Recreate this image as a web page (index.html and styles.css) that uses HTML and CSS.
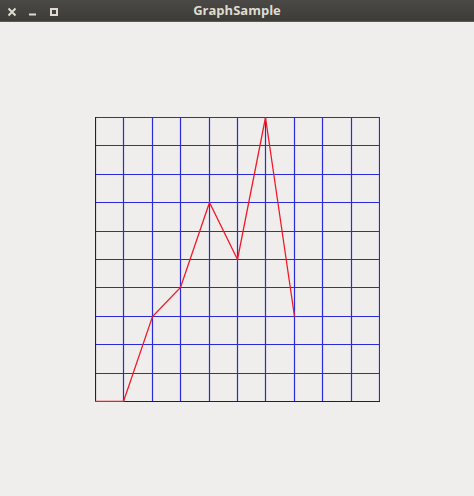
FILE: index.html
```html
<!DOCTYPE html>
<html lang="en">
<head>
    <meta charset="UTF-8">
    <title>GraphSample</title>
    <link rel="stylesheet" href="styles.css">
</head>
<body>
    <div class="titlebar">
        <div class="controls">
            <svg class="btn" width="12" height="12" viewBox="0 0 12 12">
                <path d="M2.5 2.5 L9.5 9.5 M9.5 2.5 L2.5 9.5" stroke="#dfdbd2" stroke-width="2"/>
            </svg>
            <svg class="btn" width="12" height="12" viewBox="0 0 12 12">
                <path d="M2 8.5 H9" stroke="#dfdbd2" stroke-width="2"/>
            </svg>
            <svg class="btn" width="12" height="12" viewBox="0 0 12 12">
                <rect x="3" y="3" width="6" height="6" fill="none" stroke="#dfdbd2" stroke-width="2"/>
            </svg>
        </div>
        <div class="title">GraphSample</div>
    </div>

    <div class="panel">
        <svg class="graph" width="285" height="285" viewBox="0 0 285 285">
            <g class="grid">
                <line x1="28.5" y1="0" x2="28.5" y2="285"/>
                <line x1="57.5" y1="0" x2="57.5" y2="285"/>
                <line x1="85.5" y1="0" x2="85.5" y2="285"/>
                <line x1="114.5" y1="0" x2="114.5" y2="285"/>
                <line x1="142.5" y1="0" x2="142.5" y2="285"/>
                <line x1="170.5" y1="0" x2="170.5" y2="285"/>
                <line x1="199.5" y1="0" x2="199.5" y2="285"/>
                <line x1="227.5" y1="0" x2="227.5" y2="285"/>
                <line x1="256.5" y1="0" x2="256.5" y2="285"/>
                <line x1="284.5" y1="0" x2="284.5" y2="285"/>
                <line x1="0" y1="0.5" x2="285" y2="0.5"/>
                <line x1="0" y1="28.5" x2="285" y2="28.5"/>
                <line x1="0" y1="57.5" x2="285" y2="57.5"/>
                <line x1="0" y1="85.5" x2="285" y2="85.5"/>
                <line x1="0" y1="114.5" x2="285" y2="114.5"/>
                <line x1="0" y1="142.5" x2="285" y2="142.5"/>
                <line x1="0" y1="170.5" x2="285" y2="170.5"/>
                <line x1="0" y1="199.5" x2="285" y2="199.5"/>
                <line x1="0" y1="227.5" x2="285" y2="227.5"/>
                <line x1="0" y1="256.5" x2="285" y2="256.5"/>
            </g>
            <!-- axes; the first plot segment lies on the x axis -->
            <g class="axis">
                <line x1="0.5" y1="0" x2="0.5" y2="284"/>
                <line x1="28.5" y1="284.5" x2="285" y2="284.5"/>
            </g>
            <polyline class="plot"
                points="0,284.5 28.5,284.5 57.5,199.5 85.5,170.5 114.5,85.5 142.5,142.5 170.5,0.5 199.5,199.5"/>
        </svg>
    </div>
</body>
</html>
```

FILE: styles.css
```css
body {
    margin: 0;
    background-color: #efeeed;
    font-family: 'Open Sans', 'DejaVu Sans', sans-serif;
}

.titlebar {
    height: 21px;
    background: linear-gradient(#4a4945, #3d3c38);
    border-bottom: 1px solid #5a5955;
    display: flex;
    align-items: center;
    position: relative;
}

.controls {
    display: flex;
    gap: 9px;
    padding-left: 6px;
    padding-top: 2px;
}

.title {
    position: absolute;
    left: 0;
    right: 0;
    text-align: center;
    color: #dfdbd2;
    font-size: 13px;
    font-weight: bold;
    line-height: 21px;
}

.panel {
    height: 474px;
    box-sizing: border-box;
    padding: 95px 0 0 95px;
}

.graph {
    display: block;
}

.grid line {
    stroke: #2a2ad8;
    stroke-width: 1.2;
}

.axis line {
    stroke: #222;
    stroke-width: 1.2;
}

.plot {
    fill: none;
    stroke: #f01a2a;
    stroke-width: 1.3;
}
```
